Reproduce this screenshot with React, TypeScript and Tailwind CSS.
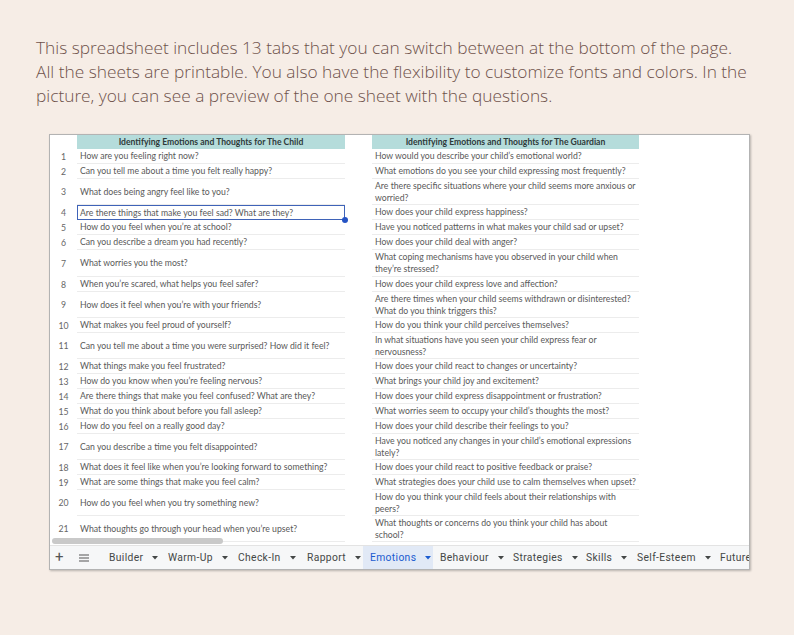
import React from "react";

type Row = { n: number; child: string; guardian: string[]; h: number };

const rows: Row[] = [
  { n: 1, h: 15, child: "How are you feeling right now?", guardian: ["How would you describe your child’s emotional world?"] },
  { n: 2, h: 15, child: "Can you tell me about a time you felt really happy?", guardian: ["What emotions do you see your child expressing most frequently?"] },
  { n: 3, h: 26, child: "What does being angry feel like to you?", guardian: ["Are there specific situations where your child seems more anxious or", "worried?"] },
  { n: 4, h: 15, child: "Are there things that make you feel sad? What are they?", guardian: ["How does your child express happiness?"] },
  { n: 5, h: 15, child: "How do you feel when you’re at school?", guardian: ["Have you noticed patterns in what makes your child sad or upset?"] },
  { n: 6, h: 15, child: "Can you describe a dream you had recently?", guardian: ["How does your child deal with anger?"] },
  { n: 7, h: 27, child: "What worries you the most?", guardian: ["What coping mechanisms have you observed in your child when", "they’re stressed?"] },
  { n: 8, h: 15, child: "When you’re scared, what helps you feel safer?", guardian: ["How does your child express love and affection?"] },
  { n: 9, h: 26, child: "How does it feel when you’re with your friends?", guardian: ["Are there times when your child seems withdrawn or disinterested?", "What do you think triggers this?"] },
  { n: 10, h: 15, child: "What makes you feel proud of yourself?", guardian: ["How do you think your child perceives themselves?"] },
  { n: 11, h: 26, child: "Can you tell me about a time you were surprised? How did it feel?", guardian: ["In what situations have you seen your child express fear or", "nervousness?"] },
  { n: 12, h: 15, child: "What things make you feel frustrated?", guardian: ["How does your child react to changes or uncertainty?"] },
  { n: 13, h: 15, child: "How do you know when you’re feeling nervous?", guardian: ["What brings your child joy and excitement?"] },
  { n: 14, h: 15, child: "Are there things that make you feel confused? What are they?", guardian: ["How does your child express disappointment or frustration?"] },
  { n: 15, h: 15, child: "What do you think about before you fall asleep?", guardian: ["What worries seem to occupy your child’s thoughts the most?"] },
  { n: 16, h: 15, child: "How do you feel on a really good day?", guardian: ["How does your child describe their feelings to you?"] },
  { n: 17, h: 26, child: "Can you describe a time you felt disappointed?", guardian: ["Have you noticed any changes in your child’s emotional expressions", "lately?"] },
  { n: 18, h: 15, child: "What does it feel like when you’re looking forward to something?", guardian: ["How does your child react to positive feedback or praise?"] },
  { n: 19, h: 15, child: "What are some things that make you feel calm?", guardian: ["What strategies does your child use to calm themselves when upset?"] },
  { n: 20, h: 26, child: "How do you feel when you try something new?", guardian: ["How do you think your child feels about their relationships with", "peers?"] },
  { n: 21, h: 26, child: "What thoughts go through your head when you’re upset?", guardian: ["What thoughts or concerns do you think your child has about", "school?"] },
];

const tabs = [
  { name: "Builder", w: "w-[59px]" },
  { name: "Warm-Up", w: "w-[70px]" },
  { name: "Check-In", w: "w-[69px]" },
  { name: "Rapport", w: "w-[63px]" },
  { name: "Emotions", w: "w-[70px]" },
  { name: "Behaviour", w: "w-[73px]" },
  { name: "Strategies", w: "w-[73px]" },
  { name: "Skills", w: "w-[51px]" },
  { name: "Self-Esteem", w: "w-[83px]" },
  { name: "Future", w: "w-[60px]" },
];

function Caret({ active }: { active?: boolean }) {
  return (
    <svg width="6" height="4" viewBox="0 0 6 4" className="ml-[9px] shrink-0">
      <path d="M0 0h6L3 3.5z" fill={active ? "#1a5bd0" : "#444746"} />
    </svg>
  );
}

export default function App() {
  return (
    <div className="w-[794px] h-[635px] bg-[#f6ede6] overflow-hidden" style={{ fontFamily: "'Open Sans', sans-serif" }}>
      {/* intro copy */}
      <div className="pl-[36px] pt-[36px] text-[17.3px] leading-[24px] font-light text-[#6f524b] whitespace-nowrap">
        <div>This spreadsheet includes 13 tabs that you can switch between at the bottom of the page.</div>
        <div>All the sheets are printable. You also have the flexibility to customize fonts and colors. In the</div>
        <div>picture, you can see a preview of the one sheet with the questions.</div>
      </div>

      {/* sheet preview */}
      <div className="ml-[49px] mt-[26px] w-[701px] bg-white border border-[#b3b3b3] shadow-[1px_1px_2px_rgba(0,0,0,0.25)]">
        <div className="relative h-[410px] overflow-hidden" style={{ fontFamily: "Lato, 'Open Sans', sans-serif" }}>
          <div className="flex h-[14px]">
            <div className="w-[27px]" />
            <div className="w-[268px] bg-[#b5dcdb] flex items-center justify-center text-[8.6px] font-bold text-[#2e3a3a]">
              Identifying Emotions and Thoughts for The Child
            </div>
            <div className="w-[27px]" />
            <div className="w-[267px] bg-[#b5dcdb] flex items-center justify-center text-[8.6px] font-bold text-[#2e3a3a]">
              Identifying Emotions and Thoughts for The Guardian
            </div>
          </div>
          {rows.map((r) => (
            <div key={r.n} className="flex text-[8.7px] text-[#595959]" style={{ height: r.h }}>
              <div className="w-[27px] flex items-center justify-center text-[#666]">{r.n}</div>
              <div className={`relative w-[268px] flex items-center pl-[3px] whitespace-nowrap ${r.n === 4 ? "" : "border-b border-[#ececec]"}`}>
                {r.child}
                {r.n === 4 && (
                  <>
                    <div className="absolute inset-0 border-[1.5px] border-[#3f63b8]" />
                    <div className="absolute right-[-3px] bottom-[-3px] w-[6px] h-[6px] rounded-full bg-[#2553c4]" />
                  </>
                )}
              </div>
              <div className="w-[27px]" />
              <div className="w-[267px] flex flex-col justify-center pl-[3px] whitespace-nowrap leading-[12px] border-b border-[#ececec]">
                {r.guardian.map((l, i) => (
                  <div key={i}>{l}</div>
                ))}
              </div>
            </div>
          ))}
          {/* horizontal scrollbar */}
          <div className="absolute left-[2px] bottom-[1px] w-[171px] h-[6px] rounded-full bg-[#c9c9c9]" />
        </div>

        {/* sheet tabs */}
        <div
          className="flex items-stretch h-[24px] bg-[#f6f7f8] border-t border-[#e3e3e3] text-[10.3px] font-normal text-[#444746] tracking-[0.35px] overflow-hidden whitespace-nowrap"
          style={{ fontFamily: "Roboto, sans-serif" }}
        >
          <div className="w-[19px] shrink-0 flex items-center justify-center text-[15px] text-[#555]">+</div>
          <div className="w-[30px] shrink-0 flex items-center justify-center">
            <svg width="10" height="8" viewBox="0 0 10 8">
              <path d="M0 1h10M0 4h10M0 7h10" stroke="#555" strokeWidth="1.1" />
            </svg>
          </div>
          <div className="w-[3px] shrink-0" />
          {tabs.map((t) => {
            const active = t.name === "Emotions";
            return (
              <div
                key={t.name}
                className={`${t.w} shrink-0 flex items-center pl-[7px] ${active ? "bg-[#e1e9f6] text-[#1a5bd0]" : ""}`}
              >
                {t.name}
                {t.name !== "Future" && <Caret active={active} />}
              </div>
            );
          })}
        </div>
      </div>
    </div>
  );
}
